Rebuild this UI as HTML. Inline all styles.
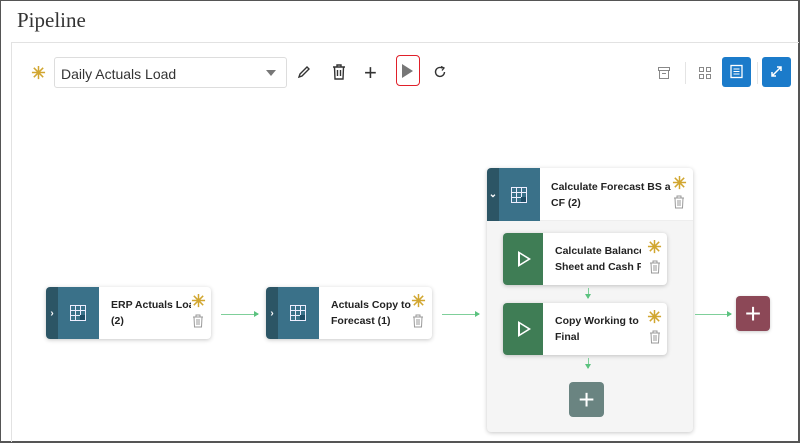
<!DOCTYPE html>
<html><head><style>
*{box-sizing:border-box;margin:0;padding:0}
body{width:800px;height:443px;overflow:hidden;background:#fff;font-family:"Liberation Sans",sans-serif;position:relative}
.frame{position:absolute;left:0;top:0;width:800px;height:443px;border:1px solid #555;border-right-width:2px;border-bottom-width:2px}
.abs{position:absolute}
.title{left:17px;top:8px;font-family:"Liberation Serif",serif;font-size:21px;color:#333}
.panel{left:11px;top:42px;width:788px;height:400px;border:1px solid #e2e2e2;border-right:none;border-bottom:none}
.sel{left:54px;top:57px;width:233px;height:31px;border:1px solid #ddd;border-radius:3px;font-size:14px;color:#333;padding:8px 6px}
.node{background:#fff;border-radius:4px;box-shadow:0 1px 4px rgba(0,0,0,.22);overflow:hidden}
.strip{position:absolute;left:0;top:0;bottom:0;width:12px;background:#2c5565;color:#fff;font-size:10px;display:flex;align-items:center;justify-content:center;font-weight:bold}
.teal{position:absolute;left:12px;top:0;bottom:0;width:41px;background:#3a7189}
.green{position:absolute;left:0;top:0;bottom:0;width:40px;background:#3f7d55}
.txt{position:absolute;font-size:10.5px;font-weight:bold;color:#222;line-height:16px;white-space:nowrap;overflow:hidden}
.gi{position:absolute;width:16px;height:16px;border:1.5px solid #eef;background:linear-gradient(#eef,#eef) 0 4px/100% 1px no-repeat,linear-gradient(#eef,#eef) 0 9px/100% 1px no-repeat,linear-gradient(90deg,#eef,#eef) 4px 0/1px 100% no-repeat,linear-gradient(90deg,#eef,#eef) 9px 0/1px 100% no-repeat}
.gi:after{content:"";position:absolute;right:0;bottom:0;width:5px;height:5px;background:#1f4d66}
.arrow{position:absolute;height:1px;background:#7fcf9a}
.arrow:after{content:"";position:absolute;right:-1px;top:-3px;border-left:5px solid #5bc27f;border-top:3.5px solid transparent;border-bottom:3.5px solid transparent}
.varrow{position:absolute;width:1px;background:#7fcf9a}
.varrow:after{content:"";position:absolute;bottom:-1px;left:-3px;border-top:5px solid #5bc27f;border-left:3.5px solid transparent;border-right:3.5px solid transparent}
.plus{color:#fff;font-size:28px;display:flex;align-items:center;justify-content:center;border-radius:4px;font-weight:300}
</style></head><body>
<svg width="0" height="0" style="position:absolute"><defs><symbol id="st" viewBox="0 0 16 16"><path d="M8 1 V15 M1 8 H15 M3 3 L13 13 M13 3 L3 13" stroke="#d1a630" stroke-width="1.6" fill="none"/></symbol><symbol id="tr" viewBox="0 0 12 14"><path d="M1 3 H11 M4 3 V1 H8 V3 M2 3 L2.5 13 H9.5 L10 3 M5 5 V11 M7 5 V11" fill="none" stroke="#999"/></symbol></defs></svg>
<div class="frame"></div>
<div class="abs title">Pipeline</div>
<div class="abs panel"></div>
<svg class="abs" style="left:31px;top:65px" width="15" height="15"><use href="#st"/></svg>
<div class="abs sel">Daily Actuals Load<span style="position:absolute;right:10px;top:12px;border-top:6px solid #777;border-left:5px solid transparent;border-right:5px solid transparent"></span></div>
<svg class="abs" style="left:296px;top:64px" width="16" height="16" viewBox="0 0 16 16"><path d="M3 13 L4 10 L11 3 L13 5 L6 12 Z" fill="none" stroke="#333" stroke-width="1.4"/></svg>
<svg class="abs" style="left:331px;top:63px" width="16" height="18" viewBox="0 0 16 18"><path d="M2 4 H14 M6 4 V2 H10 V4 M3.5 4 L4 16 H12 L12.5 4 M6.5 7 V13 M9.5 7 V13" fill="none" stroke="#333" stroke-width="1.4"/></svg>
<div class="abs" style="left:364px;top:60px;font-size:22px;color:#333">+</div>
<div class="abs" style="left:396px;top:55px;width:24px;height:31px;border:1.5px solid #e0202a;border-radius:4px"></div>
<div class="abs" style="left:402px;top:64px;border-left:11px solid #777;border-top:7px solid transparent;border-bottom:7px solid transparent"></div>
<svg class="abs" style="left:433px;top:65px" width="14" height="14" viewBox="0 0 14 14"><path d="M11.5 7 A4.5 4.5 0 1 1 9.5 3.2" fill="none" stroke="#333" stroke-width="1.4"/><path d="M8 1.5 L11 3 L9 5.5" fill="none" stroke="#333" stroke-width="1.3"/></svg>
<svg class="abs" style="left:657px;top:66px" width="14" height="14" viewBox="0 0 14 14"><rect x="1.5" y="1.5" width="11" height="3" fill="none" stroke="#888"/><path d="M2.5 4.5 V12.5 H11.5 V4.5 M5 7.5 H9" fill="none" stroke="#888"/></svg>
<div class="abs" style="left:685px;top:62px;width:1px;height:22px;background:#e4e4e4"></div>
<svg class="abs" style="left:698px;top:66px" width="14" height="14" viewBox="0 0 14 14"><g fill="none" stroke="#888"><rect x="1.5" y="1.5" width="4" height="4"/><rect x="8.5" y="1.5" width="4" height="4"/><rect x="1.5" y="8.5" width="4" height="4"/><rect x="8.5" y="8.5" width="4" height="4"/></g></svg>
<div class="abs" style="left:722px;top:57px;width:29px;height:30px;background:#1b7bca;border-radius:3px"></div>
<svg class="abs" style="left:729px;top:64px" width="15" height="15" viewBox="0 0 15 15"><rect x="2" y="1.5" width="11" height="12" fill="none" stroke="#fff" stroke-width="1.3"/><path d="M4.5 5 H10.5 M4.5 7.5 H10.5 M4.5 10 H10.5" stroke="#fff"/></svg>
<div class="abs" style="left:757px;top:62px;width:1px;height:22px;background:#e4e4e4"></div>
<div class="abs" style="left:762px;top:57px;width:29px;height:30px;background:#1b7bca;border-radius:3px"></div>
<svg class="abs" style="left:769px;top:64px" width="15" height="15" viewBox="0 0 15 15"><path d="M3 12 L12 3 M8 3 H12 V7 M3 8 V12 H7" fill="none" stroke="#fff" stroke-width="1.5"/></svg>

<div class="abs node" style="left:46px;top:287px;width:165px;height:52px">
<div class="strip">›</div><div class="teal"></div><div class="gi" style="left:24px;top:18px"></div>
<div class="txt" style="left:65px;top:10px;width:80px">ERP Actuals Loa…<br>(2)</div>
<svg class="abs" style="left:145px;top:6px" width="15" height="15"><use href="#st"/></svg>
<svg class="abs" style="left:146px;top:27px" width="12" height="14"><use href="#tr"/></svg>
</div>
<div class="arrow" style="left:221px;top:314px;width:37px"></div>
<div class="abs node" style="left:266px;top:287px;width:166px;height:52px">
<div class="strip">›</div><div class="teal"></div><div class="gi" style="left:24px;top:18px"></div>
<div class="txt" style="left:65px;top:10px;width:80px">Actuals Copy to<br>Forecast (1)</div>
<svg class="abs" style="left:145px;top:6px" width="15" height="15"><use href="#st"/></svg>
<svg class="abs" style="left:146px;top:27px" width="12" height="14"><use href="#tr"/></svg>
</div>
<div class="arrow" style="left:442px;top:314px;width:37px"></div>
<div class="abs node" style="left:487px;top:168px;width:206px;height:264px;background:#f5f5f5">
<div class="abs" style="left:0;top:0;width:206px;height:53px;background:#fff;border-bottom:1px solid #eee"></div>
<div class="strip" style="height:53px;bottom:auto">⌄</div><div class="teal" style="height:53px;bottom:auto"></div><div class="gi" style="left:24px;top:19px"></div>
<div class="txt" style="left:64px;top:11px;width:120px">Calculate Forecast BS an…<br>CF (2)</div>
<svg class="abs" style="left:185px;top:7px" width="15" height="15"><use href="#st"/></svg>
<svg class="abs" style="left:186px;top:27px" width="12" height="14"><use href="#tr"/></svg>
</div>
<div class="abs node" style="left:503px;top:233px;width:164px;height:52px">
<div class="green"></div><div class="abs" style="left:15px;top:18px;border-left:13px solid #fff;border-top:8px solid transparent;border-bottom:8px solid transparent"></div><div class="abs" style="left:17px;top:21px;border-left:8px solid #3f7d55;border-top:5px solid transparent;border-bottom:5px solid transparent"></div>
<div class="txt" style="left:52px;top:10px;width:86px">Calculate Balance<br>Sheet and Cash Flo</div>
<svg class="abs" style="left:144px;top:6px" width="15" height="15"><use href="#st"/></svg>
<svg class="abs" style="left:146px;top:27px" width="12" height="14"><use href="#tr"/></svg>
</div>
<div class="varrow" style="left:588px;top:288px;height:10px"></div>
<div class="abs node" style="left:503px;top:303px;width:164px;height:52px">
<div class="green"></div><div class="abs" style="left:15px;top:18px;border-left:13px solid #fff;border-top:8px solid transparent;border-bottom:8px solid transparent"></div><div class="abs" style="left:17px;top:21px;border-left:8px solid #3f7d55;border-top:5px solid transparent;border-bottom:5px solid transparent"></div>
<div class="txt" style="left:52px;top:10px;width:86px">Copy Working to<br>Final</div>
<svg class="abs" style="left:144px;top:6px" width="15" height="15"><use href="#st"/></svg>
<svg class="abs" style="left:146px;top:27px" width="12" height="14"><use href="#tr"/></svg>
</div>
<div class="varrow" style="left:588px;top:358px;height:10px"></div>
<div class="abs plus" style="left:569px;top:382px;width:35px;height:35px;background:#6a8481">+</div>
<div class="arrow" style="left:695px;top:314px;width:36px"></div>
<div class="abs plus" style="left:736px;top:296px;width:34px;height:35px;background:#8c4857;box-shadow:0 1px 3px rgba(0,0,0,.2)">+</div>
</body></html>
